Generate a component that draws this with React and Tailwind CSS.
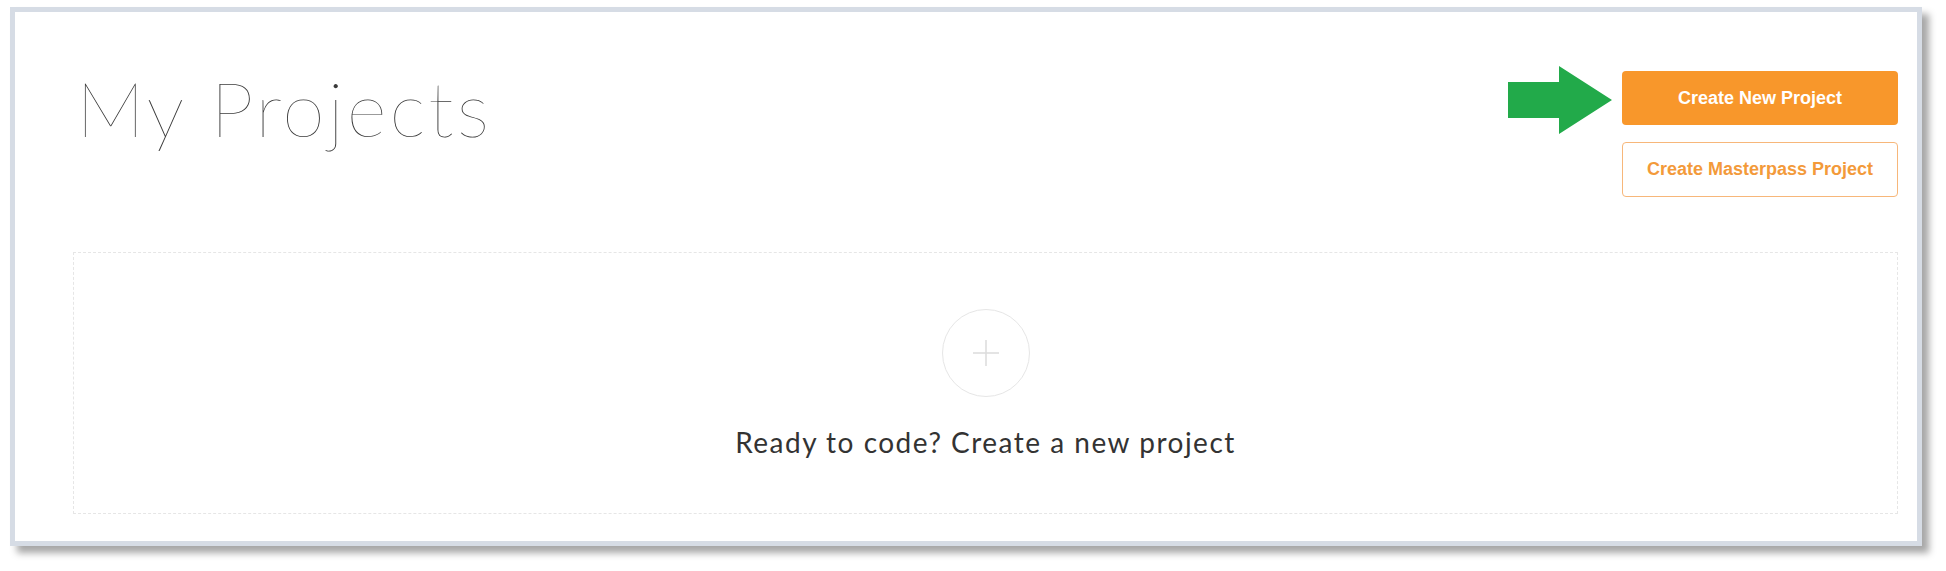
import React from 'react'

function Arrow() {
  return (
    <svg width="104" height="68" viewBox="0 0 104 68" className="mt-[-5px] mr-[10px] shrink-0">
      <path d="M0 16 H51 V0 L104 34 L51 68 V52 H0 Z" fill="#22aa4a" />
    </svg>
  )
}

export default function App() {
  return (
    <div className="w-[1946px] h-[571px] bg-white pt-[7px] pl-[10px]" style={{ fontFamily: 'Lato, "Noto Sans", sans-serif' }}>
      <div className="w-[1912px] h-[539px] border-[5px] border-[#d6dce5] bg-white shadow-[7px_7px_7px_rgba(0,0,0,0.35)] pl-[58px] pr-[19px] flex flex-col">
        {/* Header */}
        <div className="flex justify-between items-start">
          <h1 className="mt-[57px] ml-[3px] text-[77px] leading-none font-thin text-[#3a3a3a] tracking-[3px]">
            My Projects
          </h1>
          <div className="flex items-start mt-[59px]">
            <Arrow />
            <div className="flex flex-col gap-[17px] w-[276px]" style={{ fontFamily: '"Liberation Sans", Arial, sans-serif' }}>
              <button className="h-[54px] rounded-[4px] bg-[#f8972b] text-white text-[18px] font-bold">
                Create New Project
              </button>
              <button className="h-[55px] rounded-[4px] border border-[#f7b77a] bg-white text-[#f39a3a] text-[18px] font-bold">
                Create Masterpass Project
              </button>
            </div>
          </div>
        </div>

        {/* Empty state */}
        <div className="mt-[55px] h-[262px] border border-dashed border-[#e6e6e6] flex flex-col items-center">
          <div className="mt-[56px] w-[88px] h-[88px] rounded-full border border-[#e6e6e6] flex items-center justify-center">
            <svg width="26" height="26" viewBox="0 0 26 26">
              <path d="M13 0 V26 M0 13 H26" stroke="#dcdcdc" strokeWidth="1.5" />
            </svg>
          </div>
          <p className="mt-[24px] text-[28px] text-[#333333] tracking-[1.5px]">
            Ready to code? Create a new project
          </p>
        </div>
      </div>
    </div>
  )
}
